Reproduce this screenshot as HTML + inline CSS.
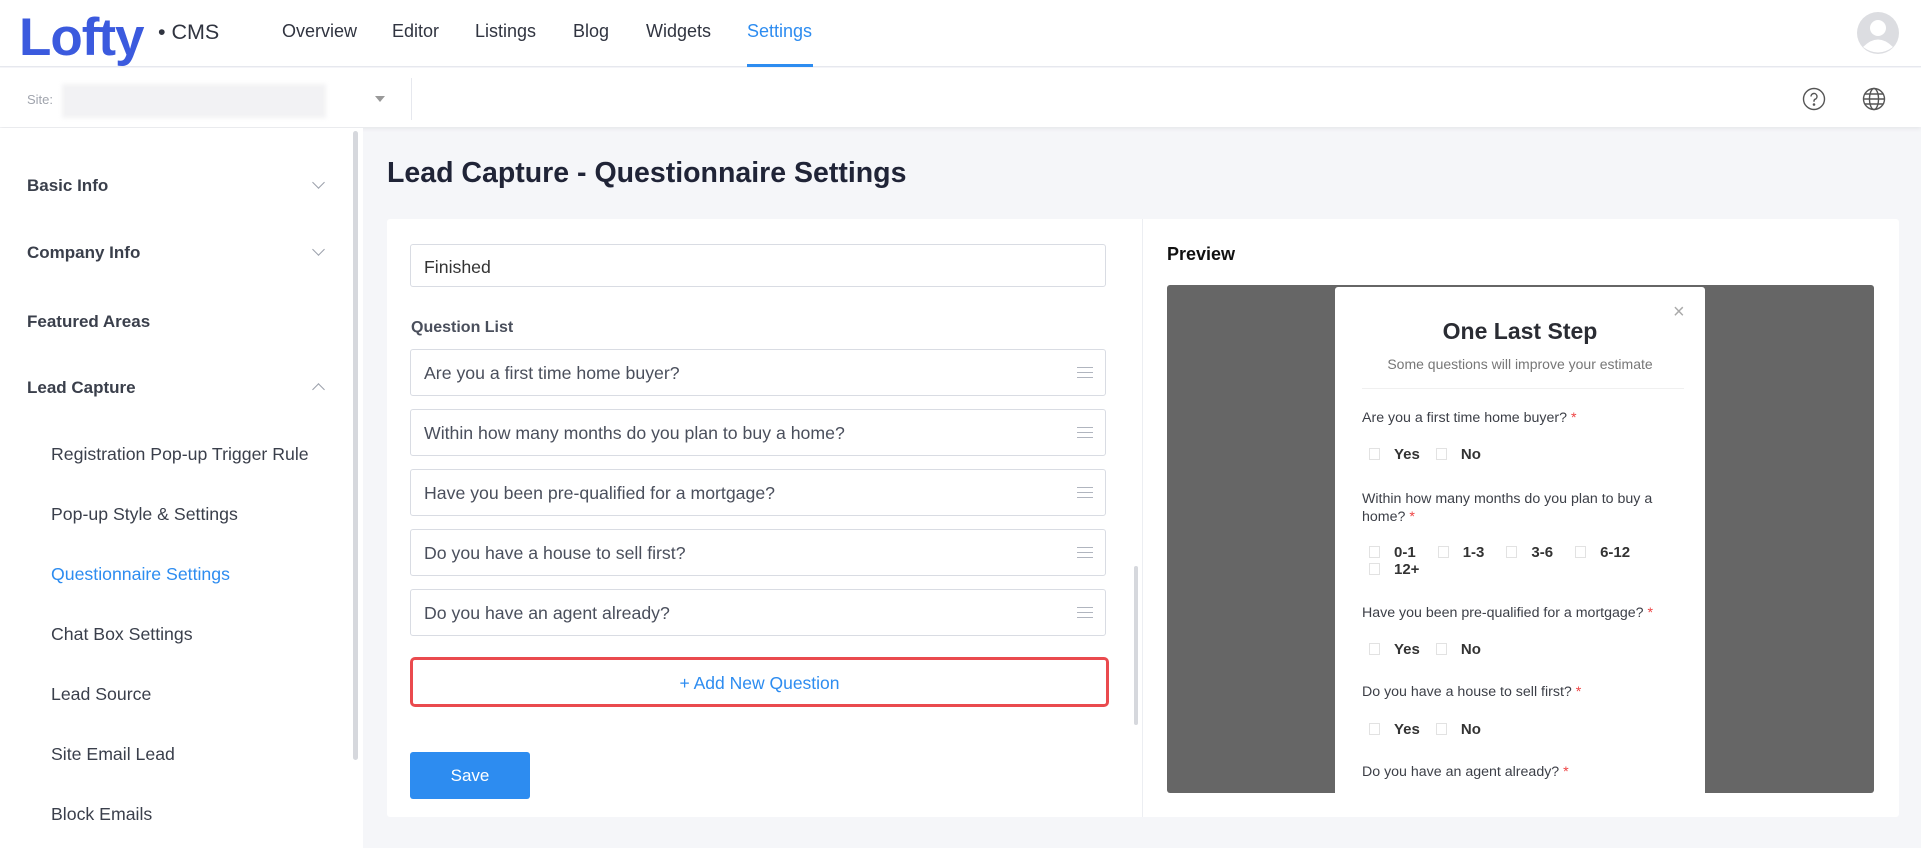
<!DOCTYPE html>
<html><head><meta charset="utf-8"><style>
*{box-sizing:border-box;margin:0;padding:0}
body{width:1921px;height:848px;overflow:hidden;font-family:"Liberation Sans",sans-serif;background:#f5f6f9;position:relative;color:#202437}
.a{position:absolute}
.hdr{left:0;top:0;width:1921px;height:67px;background:#fff;border-bottom:1px solid #e6e8ee}
.nav{top:21px;font-size:18px;color:#303440}
.bar2{left:0;top:68px;width:1921px;height:59px;background:#fff;box-shadow:0 2px 4px rgba(0,0,0,.06)}
.side{left:0;top:128px;width:363px;height:720px;background:#fff}
.si{left:27px;font-size:17px;font-weight:bold;color:#3a3f4b}
.ss{left:51px;font-size:17.7px;color:#3a3f4b}
.chev{left:314px;width:9px;height:9px;border-right:1px solid #9aa0ab;border-bottom:1px solid #9aa0ab}
.card{left:387px;top:219px;width:1512px;height:598px;background:#fff;border-radius:3px}
.q{left:410px;width:696px;height:47px;border:1px solid #d9dce3;border-radius:3px;font-size:17.7px;color:#4a4f5c;padding:13px 0 0 13px;background:#fff}
.drag{position:absolute;right:12px;top:17px;width:16px;height:11px;border-top:1px solid #b0b5bf;border-bottom:1px solid #b0b5bf}
.drag:after{content:"";position:absolute;left:0;top:4px;width:16px;border-top:1px solid #b0b5bf}
.mt{font-size:14.2px;color:#3c3f47;left:1362px}
.cb{display:inline-block;width:11px;height:12px;border:1px solid #e2e2e2;vertical-align:middle;margin-right:14px}
.opt{font-size:15px;font-weight:bold;color:#333;left:1369px}
.opt span.l{display:inline-block;vertical-align:middle;margin-right:16px}
.o2 span.l{margin-right:22px}
.r{color:#e44}
</style></head><body>
<div class="a hdr"></div>
<div class="a" style="left:19px;top:7px;font-size:53px;font-weight:bold;color:#3b5ade;letter-spacing:-1px">Lofty</div>
<div class="a" style="left:158px;top:20px;font-size:21.5px;color:#303440">• CMS</div>
<div class="a nav" style="left:282px">Overview</div>
<div class="a nav" style="left:392px">Editor</div>
<div class="a nav" style="left:475px">Listings</div>
<div class="a nav" style="left:573px">Blog</div>
<div class="a nav" style="left:646px">Widgets</div>
<div class="a nav" style="left:747px;color:#2d8cf0">Settings</div>
<div class="a" style="left:747px;top:64px;width:66px;height:3px;background:#2d8cf0"></div>
<svg class="a" style="left:1857px;top:12px" width="42" height="42" viewBox="0 0 42 42"><circle cx="21" cy="21" r="21" fill="#dcdde1"/><circle cx="21" cy="16" r="8" fill="#fff"/><path d="M6 35 Q21 20 36 35 Q21 46 6 35Z" fill="#fff"/></svg>
<div class="a bar2"></div>
<div class="a" style="left:27px;top:92px;font-size:13px;color:#a0a4ad">Site:</div>
<div class="a" style="left:62px;top:84px;width:264px;height:34px;background:#f2f2f4;filter:blur(2px)"></div>
<div class="a" style="left:375px;top:96px;border:5px solid transparent;border-top:6px solid #999"></div>
<div class="a" style="left:411px;top:78px;width:1px;height:42px;background:#e6e8ee"></div>
<svg class="a" style="left:1802px;top:87px" width="24" height="24" viewBox="0 0 24 24" fill="none" stroke="#555" stroke-width="1.4"><circle cx="12" cy="12" r="10.5"/><path d="M9 9.5a3 3 0 1 1 4 2.8c-.8.4-1 1-1 1.8v.6"/><circle cx="12" cy="17.5" r=".6" fill="#555"/></svg>
<svg class="a" style="left:1862px;top:87px" width="24" height="24" viewBox="0 0 24 24" fill="none" stroke="#555" stroke-width="1.4"><circle cx="12" cy="12" r="10.5"/><ellipse cx="12" cy="12" rx="4.5" ry="10.5"/><path d="M1.5 12h21M3 7h18M3 17h18"/></svg>
<div class="a side"></div>
<div class="a" style="left:353px;top:131px;width:5px;height:629px;background:#d6d8dd;border-radius:3px"></div>
<div class="a si" style="top:176px">Basic Info</div><div class="a chev" style="top:178px;transform:rotate(45deg)"></div>
<div class="a si" style="top:243px">Company Info</div><div class="a chev" style="top:245px;transform:rotate(45deg)"></div>
<div class="a si" style="top:312px">Featured Areas</div>
<div class="a si" style="top:378px">Lead Capture</div><div class="a chev" style="top:385px;transform:rotate(225deg)"></div>
<div class="a ss" style="top:444px">Registration Pop-up Trigger Rule</div>
<div class="a ss" style="top:504px">Pop-up Style &amp; Settings</div>
<div class="a ss" style="top:564px;color:#2d8cf0">Questionnaire Settings</div>
<div class="a ss" style="top:624px">Chat Box Settings</div>
<div class="a ss" style="top:684px">Lead Source</div>
<div class="a ss" style="top:744px">Site Email Lead</div>
<div class="a ss" style="top:804px">Block Emails</div>
<div class="a" style="left:387px;top:157px;font-size:28.5px;font-weight:bold;color:#202437">Lead Capture - Questionnaire Settings</div>
<div class="a card"></div>
<div class="a" style="left:1142px;top:219px;width:1px;height:598px;background:#eceef2"></div>
<div class="a q" style="top:244px;height:43px;padding-top:12px;color:#333">Finished</div>
<div class="a" style="left:411px;top:319px;font-size:16px;font-weight:bold;color:#4a4f5c">Question List</div>
<div class="a q" style="top:349px">Are you a first time home buyer?<div class="drag"></div></div>
<div class="a q" style="top:409px">Within how many months do you plan to buy a home?<div class="drag"></div></div>
<div class="a q" style="top:469px">Have you been pre-qualified for a mortgage?<div class="drag"></div></div>
<div class="a q" style="top:529px">Do you have a house to sell first?<div class="drag"></div></div>
<div class="a q" style="top:589px">Do you have an agent already?<div class="drag"></div></div>
<div class="a" style="left:410px;top:657px;width:699px;height:50px;border:3px solid #ea4a4e;border-radius:5px;text-align:center;font-size:17.5px;color:#2d8cf0;padding-top:13px">+ Add New Question</div>
<div class="a" style="left:1134px;top:566px;width:4px;height:159px;background:#d6d8dd;border-radius:2px"></div>
<div class="a" style="left:410px;top:752px;width:120px;height:47px;background:#2d8cf0;border-radius:3px;color:#fff;font-size:17px;text-align:center;padding-top:14px">Save</div>
<div class="a" style="left:1167px;top:244px;font-size:18px;font-weight:bold;color:#111">Preview</div>
<div class="a" style="left:1167px;top:285px;width:707px;height:508px;background:#666;border-radius:3px;overflow:hidden">
<div class="a" style="left:168px;top:2px;width:370px;height:520px;background:#fff;border-radius:3px"></div>
</div>
<div class="a" style="left:1673px;top:301px;font-size:20px;color:#aaa">×</div>
<div class="a" style="left:1335px;top:318px;width:370px;text-align:center;font-size:23px;font-weight:bold;color:#2a2c33">One Last Step</div>
<div class="a" style="left:1335px;top:356px;width:370px;text-align:center;font-size:14px;color:#777">Some questions will improve your estimate</div>
<div class="a" style="left:1362px;top:388px;width:322px;height:1px;background:#f0f0f0"></div>
<div class="a mt" style="top:410px">Are you a first time home buyer? <span class="r">*</span></div>
<div class="a opt" style="top:445px"><span class="cb"></span><span class="l">Yes</span><span class="cb"></span><span class="l">No</span></div>
<div class="a mt" style="top:490px;width:330px;line-height:18px">Within how many months do you plan to buy a home? <span class="r">*</span></div>
<div class="a opt o2" style="top:543px"><span class="cb"></span><span class="l">0-1</span><span class="cb"></span><span class="l">1-3</span><span class="cb"></span><span class="l">3-6</span><span class="cb"></span><span class="l">6-12</span></div>
<div class="a opt" style="top:560px"><span class="cb"></span><span class="l">12+</span></div>
<div class="a mt" style="top:605px">Have you been pre-qualified for a mortgage? <span class="r">*</span></div>
<div class="a opt" style="top:640px"><span class="cb"></span><span class="l">Yes</span><span class="cb"></span><span class="l">No</span></div>
<div class="a mt" style="top:684px">Do you have a house to sell first? <span class="r">*</span></div>
<div class="a opt" style="top:720px"><span class="cb"></span><span class="l">Yes</span><span class="cb"></span><span class="l">No</span></div>
<div class="a mt" style="top:764px">Do you have an agent already? <span class="r">*</span></div>
</body></html>
